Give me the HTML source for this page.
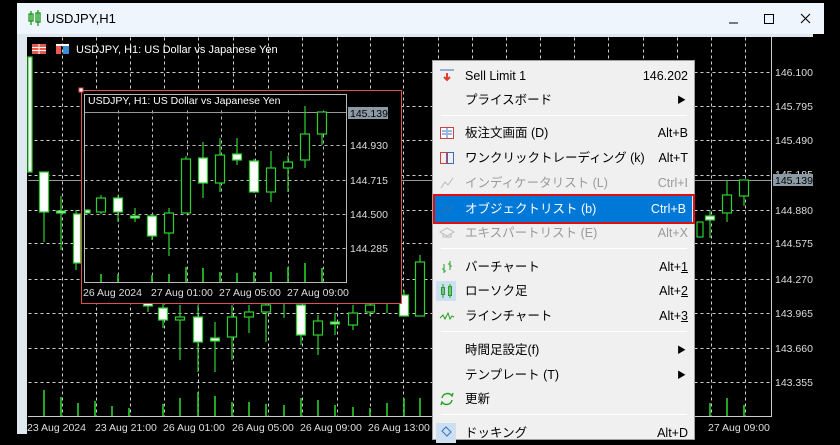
<!DOCTYPE html>
<html><head><meta charset="utf-8"><style>
*{margin:0;padding:0;box-sizing:border-box}
body{width:840px;height:436px;background:#000;position:relative;overflow:hidden;font-family:"Liberation Sans","Noto Sans CJK JP",sans-serif}
#menu{position:absolute;left:432px;top:60px;width:263px;height:380px;background:#f0f0f0;border:1px solid #a0a0a0;font-size:12.5px;color:#000}
.it{position:absolute;left:0;width:261px;height:24px;line-height:24px}
.it .t{position:absolute;left:32px}
.it .k{position:absolute;right:6px}
.it .ar{position:absolute;right:8px;font-size:9px}
.dis{color:#9a9a9a}
.sep{position:absolute;left:8px;width:246px;height:1px;background:#c8c8c8;border-bottom:1px solid #fff}
.ic{position:absolute;left:6px;top:4px;width:16px;height:16px}
.hl{background:#0078d7;color:#fff}
</style></head><body>
<svg width="840" height="436" style="position:absolute;left:0;top:0" font-family="Liberation Sans,sans-serif">
<rect x="17" y="3" width="807" height="31" fill="#eef5fc"/>
<rect x="17" y="34" width="10" height="400" fill="#dfe7ef"/>
<rect x="17" y="34" width="807" height="3" fill="#dfe7ef"/>
<rect x="813" y="34" width="11" height="400" fill="#000"/>
<g stroke="#1a9b1a" stroke-width="1.3" fill="none"><line x1="31" y1="11" x2="31" y2="25"/><rect x="29" y="14" width="4" height="7"/><line x1="38" y1="10" x2="38" y2="26"/><rect x="36" y="13" width="4" height="9"/></g>
<text x="46" y="23" font-size="13" fill="#000">USDJPY,H1</text>
<line x1="729" y1="23" x2="738" y2="23" stroke="#000"/>
<rect x="764.5" y="14.5" width="9" height="9" fill="none" stroke="#000"/>
<path d="M801 14 L810 23 M810 14 L801 23" stroke="#000" stroke-width="1.1"/>
<rect x="27" y="37" width="786" height="399" fill="#000"/>
<g stroke="#d0d0d0" stroke-dasharray="3,3" stroke-width="1" transform="translate(0.5,0.5)">
<line x1="28" y1="72" x2="771" y2="72"/><line x1="28" y1="106" x2="771" y2="106"/><line x1="28" y1="140" x2="771" y2="140"/><line x1="28" y1="175" x2="771" y2="175"/><line x1="28" y1="210" x2="771" y2="210"/><line x1="28" y1="243" x2="771" y2="243"/><line x1="28" y1="279" x2="771" y2="279"/><line x1="28" y1="313" x2="771" y2="313"/><line x1="28" y1="348" x2="771" y2="348"/><line x1="28" y1="382" x2="771" y2="382"/>
<line x1="62" y1="37" x2="62" y2="416"/><line x1="96" y1="37" x2="96" y2="416"/><line x1="130" y1="37" x2="130" y2="416"/><line x1="164" y1="37" x2="164" y2="416"/><line x1="198" y1="37" x2="198" y2="416"/><line x1="233" y1="37" x2="233" y2="416"/><line x1="268" y1="37" x2="268" y2="416"/><line x1="302" y1="37" x2="302" y2="416"/><line x1="337" y1="37" x2="337" y2="416"/><line x1="370" y1="37" x2="370" y2="416"/><line x1="403" y1="37" x2="403" y2="416"/><line x1="438" y1="37" x2="438" y2="416"/><line x1="472" y1="37" x2="472" y2="416"/><line x1="506" y1="37" x2="506" y2="416"/><line x1="540" y1="37" x2="540" y2="416"/><line x1="574" y1="37" x2="574" y2="416"/><line x1="608" y1="37" x2="608" y2="416"/><line x1="643" y1="37" x2="643" y2="416"/><line x1="677" y1="37" x2="677" y2="416"/><line x1="711" y1="37" x2="711" y2="416"/><line x1="745" y1="37" x2="745" y2="416"/>
</g>
<line x1="28" y1="180.5" x2="771" y2="180.5" stroke="#999"/>
<line x1="771.5" y1="37" x2="771.5" y2="417" stroke="#ccc"/>
<line x1="28" y1="416.5" x2="771" y2="416.5" stroke="#ccc"/>
<g stroke="#2bd12b" stroke-width="1.2">
<line x1="44" y1="172" x2="44" y2="242"/><line x1="61" y1="196" x2="61" y2="250"/><line x1="76" y1="210" x2="76" y2="270"/>
<line x1="148" y1="300" x2="148" y2="312"/><line x1="163" y1="300" x2="163" y2="328"/><line x1="180" y1="305" x2="180" y2="360"/><line x1="198" y1="305" x2="198" y2="372"/><line x1="215" y1="322" x2="215" y2="372"/><line x1="232" y1="305" x2="232" y2="360"/><line x1="249" y1="305" x2="249" y2="333"/><line x1="266" y1="300" x2="266" y2="342"/><line x1="284" y1="300" x2="284" y2="318"/><line x1="301" y1="305" x2="301" y2="345"/><line x1="318" y1="315" x2="318" y2="355"/><line x1="335" y1="313" x2="335" y2="335"/><line x1="353" y1="305" x2="353" y2="330"/><line x1="370" y1="300" x2="370" y2="316"/><line x1="387" y1="300" x2="387" y2="313"/><line x1="404" y1="290" x2="404" y2="316"/><line x1="420" y1="255" x2="420" y2="316"/>
<line x1="710" y1="210" x2="710" y2="238"/><line x1="727" y1="180" x2="727" y2="222"/><line x1="744" y1="180" x2="744" y2="206"/>
</g>
<g stroke="#2bd12b" stroke-width="1.2">
<rect x="28" y="57" width="4" height="115" fill="#fff"/><rect x="39.5" y="172" width="9" height="40" fill="#fff"/><rect x="56.5" y="211" width="9" height="2" fill="#fff"/><rect x="73.5" y="214" width="7" height="49" fill="#fff"/>
<rect x="143.5" y="303" width="9" height="3" fill="#fff"/><rect x="158.5" y="308" width="9" height="12" fill="#fff"/><rect x="175.5" y="317" width="9" height="3" fill="#000"/><rect x="193.5" y="317" width="9" height="25" fill="#fff"/><rect x="210.5" y="338" width="9" height="3" fill="#fff"/><rect x="227.5" y="317" width="9" height="20" fill="#000"/><rect x="244.5" y="312" width="9" height="5" fill="#000"/><rect x="261.5" y="305" width="9" height="7" fill="#000"/><rect x="296.5" y="305" width="9" height="30" fill="#fff"/><rect x="313.5" y="321" width="9" height="14" fill="#000"/><rect x="330.5" y="322" width="9" height="2" fill="#fff"/><rect x="348.5" y="313" width="9" height="12" fill="#000"/><rect x="365.5" y="305" width="9" height="7" fill="#000"/><rect x="399.5" y="295" width="9" height="21" fill="#fff"/><rect x="415.5" y="262" width="9" height="54" fill="#000"/>
<rect x="697" y="222" width="6" height="15" fill="#000"/><rect x="705.5" y="216" width="9" height="4" fill="#fff"/><rect x="722.5" y="195" width="9" height="18" fill="#000"/><rect x="739.5" y="180" width="9" height="16" fill="#000"/>
</g>
<g stroke="#2bd12b" stroke-width="1.6">
<line x1="44" y1="390" x2="44" y2="416"/><line x1="61" y1="397" x2="61" y2="416"/><line x1="78" y1="403" x2="78" y2="416"/><line x1="95" y1="401" x2="95" y2="416"/><line x1="112" y1="406" x2="112" y2="416"/><line x1="129" y1="408" x2="129" y2="416"/><line x1="163" y1="404" x2="163" y2="416"/><line x1="180" y1="398" x2="180" y2="416"/><line x1="198" y1="392" x2="198" y2="416"/><line x1="215" y1="396" x2="215" y2="416"/><line x1="232" y1="402" x2="232" y2="416"/><line x1="249" y1="402" x2="249" y2="416"/><line x1="266" y1="404" x2="266" y2="416"/><line x1="284" y1="405" x2="284" y2="416"/><line x1="301" y1="398" x2="301" y2="416"/><line x1="318" y1="400" x2="318" y2="416"/><line x1="335" y1="405" x2="335" y2="416"/><line x1="353" y1="407" x2="353" y2="416"/><line x1="370" y1="408" x2="370" y2="416"/><line x1="387" y1="403" x2="387" y2="416"/><line x1="404" y1="398" x2="404" y2="416"/><line x1="420" y1="398" x2="420" y2="416"/>
<line x1="710" y1="403" x2="710" y2="416"/><line x1="727" y1="398" x2="727" y2="416"/><line x1="744" y1="405" x2="744" y2="416"/>
</g>
<g font-size="10.5" fill="#ddd">
<text x="775" y="76">146.100</text><text x="775" y="110">145.795</text><text x="775" y="144">145.490</text><text x="775" y="178">145.185</text><text x="775" y="214">144.880</text><text x="775" y="247">144.575</text><text x="775" y="283">144.270</text><text x="775" y="317">143.965</text><text x="775" y="352">143.660</text><text x="775" y="386">143.355</text>
</g>
<rect x="773" y="174" width="40" height="12" fill="#8c9aa6"/><text x="775" y="184" font-size="10.5" fill="#000">145.139</text>
<g font-size="10.5" fill="#ddd">
<text x="27" y="431">23 Aug 2024</text><text x="95" y="431">23 Aug 21:00</text><text x="163" y="431">26 Aug 01:00</text><text x="232" y="431">26 Aug 05:00</text><text x="300" y="431">26 Aug 09:00</text><text x="368" y="431">26 Aug 13:00</text><text x="708" y="431">27 Aug 09:00</text>
</g>
<rect x="32" y="44" width="14" height="10" fill="#e85a4f"/><g stroke="#fff"><line x1="39" y1="44" x2="39" y2="54"/><line x1="32" y1="47.5" x2="46" y2="47.5"/><line x1="32" y1="50.5" x2="46" y2="50.5"/></g>
<rect x="56" y="44" width="5" height="10" fill="#e85a4f"/><rect x="63" y="44" width="6" height="10" fill="#3a8fd6"/><rect x="56" y="44" width="13" height="2" fill="#fff"/>
<text x="76" y="53" font-size="11" fill="#fff">USDJPY, H1:  US Dollar vs Japanese Yen</text>
<rect x="81.5" y="90.5" width="320" height="213" fill="#000" stroke="#e05050"/>
<rect x="79" y="88" width="4" height="4" fill="#fff" stroke="#e05050"/>
<g stroke="#bbb" stroke-dasharray="3,3" transform="translate(0.5,0.5)">
<line x1="84" y1="145" x2="346" y2="145"/><line x1="84" y1="180" x2="346" y2="180"/><line x1="84" y1="214" x2="346" y2="214"/><line x1="84" y1="248" x2="346" y2="248"/>
<line x1="118" y1="110" x2="118" y2="282"/><line x1="152" y1="110" x2="152" y2="282"/><line x1="187" y1="110" x2="187" y2="282"/><line x1="221" y1="110" x2="221" y2="282"/><line x1="255" y1="110" x2="255" y2="282"/><line x1="288" y1="110" x2="288" y2="282"/><line x1="323" y1="110" x2="323" y2="282"/>
</g>
<line x1="84" y1="112.5" x2="346" y2="112.5" stroke="#999"/>
<rect x="84.5" y="94.5" width="262" height="188" fill="none" stroke="#bbb"/>
<text x="88" y="104" font-size="10.5" fill="#fff">USDJPY, H1:  US Dollar vs Japanese Yen</text>
<g stroke="#2bd12b" stroke-width="1.2">
<line x1="101" y1="195" x2="101" y2="214"/><line x1="118" y1="195" x2="118" y2="222"/><line x1="135" y1="208" x2="135" y2="222"/><line x1="152" y1="214" x2="152" y2="240"/><line x1="169" y1="208" x2="169" y2="256"/><line x1="186" y1="156" x2="186" y2="213"/><line x1="203" y1="142" x2="203" y2="198"/><line x1="220" y1="138" x2="220" y2="192"/><line x1="237" y1="138" x2="237" y2="165"/><line x1="254" y1="159" x2="254" y2="193"/><line x1="271" y1="151" x2="271" y2="202"/><line x1="288" y1="156" x2="288" y2="192"/><line x1="305" y1="106" x2="305" y2="168"/><line x1="322" y1="112" x2="322" y2="145"/>
<rect x="85" y="210" width="5" height="3" fill="#fff"/><rect x="96.5" y="198" width="9" height="14" fill="#000"/><rect x="113.5" y="198" width="9" height="14" fill="#fff"/><rect x="130.5" y="216" width="9" height="2" fill="#fff"/><rect x="147.5" y="216" width="9" height="20" fill="#fff"/><rect x="164.5" y="213" width="9" height="20" fill="#000"/><rect x="181.5" y="159" width="9" height="54" fill="#000"/><rect x="198.5" y="158" width="9" height="25" fill="#fff"/><rect x="215.5" y="155" width="9" height="28" fill="#000"/><rect x="232.5" y="154" width="9" height="6" fill="#fff"/><rect x="249.5" y="161" width="9" height="31" fill="#fff"/><rect x="266.5" y="168" width="9" height="24" fill="#000"/><rect x="283.5" y="162" width="9" height="6" fill="#000"/><rect x="300.5" y="134" width="9" height="26" fill="#000"/><rect x="317.5" y="112" width="9" height="22" fill="#000"/>
</g>
<g stroke="#2bd12b" stroke-width="1.6">
<line x1="101" y1="274" x2="101" y2="282"/><line x1="118" y1="274" x2="118" y2="282"/><line x1="152" y1="275" x2="152" y2="282"/><line x1="169" y1="274" x2="169" y2="282"/><line x1="186" y1="267" x2="186" y2="282"/><line x1="203" y1="268" x2="203" y2="282"/><line x1="220" y1="272" x2="220" y2="282"/><line x1="237" y1="273" x2="237" y2="282"/><line x1="254" y1="272" x2="254" y2="282"/><line x1="271" y1="272" x2="271" y2="282"/><line x1="288" y1="267" x2="288" y2="282"/><line x1="305" y1="263" x2="305" y2="282"/><line x1="322" y1="268" x2="322" y2="282"/>
</g>
<g font-size="10.5" fill="#ddd">
<text x="350" y="149">144.930</text><text x="350" y="184">144.715</text><text x="350" y="218">144.500</text><text x="350" y="252">144.285</text>
<text x="83" y="296">26 Aug 2024</text><text x="151" y="296">27 Aug 01:00</text><text x="219" y="296">27 Aug 05:00</text><text x="287" y="296">27 Aug 09:00</text>
</g>
<rect x="348" y="107" width="40" height="12" fill="#8c9aa6"/><text x="350" y="117" font-size="10.5" fill="#000">145.139</text>
</svg>

<div id="menu">
<div class="it" style="top:3px"><svg class="ic"><line x1="1" y1="2" x2="15" y2="2" stroke="#3a6fc0"/><path d="M8 5 V11 M5 9 L8 12 L11 9" stroke="#e04030" stroke-width="2" fill="none"/></svg><span class="t">Sell Limit 1</span><span class="k">146.202</span></div>
<div class="it" style="top:27px"><span class="t">プライスボード</span><span class="ar">▶</span></div>
<div class="sep" style="top:54px"></div>
<div class="it" style="top:60px"><svg class="ic"><rect x="1.5" y="2.5" width="13" height="11" fill="#fff" stroke="#d04040"/><path d="M8 3 V13 M3 6 H7 M3 9 H7 M9 6 H13 M9 9 H13" stroke="#3a6fc0"/></svg><span class="t">板注文画面 (D)</span><span class="k">Alt+B</span></div>
<div class="it" style="top:85px"><svg class="ic"><rect x="1.5" y="2.5" width="6" height="11" fill="none" stroke="#d04040"/><rect x="8.5" y="2.5" width="6" height="11" fill="none" stroke="#3a6fc0"/></svg><span class="t">ワンクリックトレーディング (k)</span><span class="k">Alt+T</span></div>
<div class="it dis" style="top:110px"><svg class="ic"><path d="M2 13 L6 7 L9 10 L14 3" stroke="#bbb" fill="none"/></svg><span class="t">インディケータリスト (L)</span><span class="k">Ctrl+I</span></div>
<div class="it hl" style="top:135px;left:2px;width:257px;height:26px;line-height:26px"><svg class="ic" style="left:4px;top:5px"><path d="M2 12 L7 6 L10 9 L14 4" stroke="#3a70a8" fill="none"/></svg><span class="t" style="left:30px">オブジェクトリスト (b)</span><span class="k">Ctrl+B</span></div>
<div style="position:absolute;left:0;top:133px;width:262px;height:30px;border:2px solid #e01010"></div>
<div class="it dis" style="top:160px"><svg class="ic"><path d="M1 7 L8 3 L15 7 L8 11 Z M4 9 V12 H12 V9" stroke="#bbb" fill="none"/></svg><span class="t">エキスパートリスト (E)</span><span class="k">Alt+X</span></div>
<div class="sep" style="top:187px"></div>
<div class="it" style="top:194px"><svg class="ic"><path d="M5 5 V14 M3 10 H5 M5 12 H7 M11 2 V11 M9 5 H11 M11 7 H13" stroke="#22a022" fill="none"/></svg><span class="t">バーチャート</span><span class="k">Alt+<u>1</u></span></div>
<div class="it" style="top:218px"><svg class="ic" style="background:#cde0f2;width:20px;height:20px;left:3px;top:2px"><g stroke="#22a022" fill="none"><path d="M7 3 V17 M14 3 V17"/><rect x="5.5" y="6.5" width="3" height="7"/><rect x="12.5" y="5.5" width="3" height="9"/></g></svg><span class="t">ローソク足</span><span class="k">Alt+<u>2</u></span></div>
<div class="it" style="top:243px"><svg class="ic"><path d="M1 10 L4 7 L6 11 L9 5 L11 11 L13 8 L15 9" stroke="#22a022" fill="none"/></svg><span class="t">ラインチャート</span><span class="k">Alt+<u>3</u></span></div>
<div class="sep" style="top:270px"></div>
<div class="it" style="top:277px"><span class="t">時間足設定(f)</span><span class="ar">▶</span></div>
<div class="it" style="top:302px"><span class="t">テンプレート (T)</span><span class="ar">▶</span></div>
<div class="it" style="top:326px"><svg class="ic"><path d="M3 7 A5.5 5.5 0 0 1 13 5 M13 9 A5.5 5.5 0 0 1 3 11 M11 3 L13 5 L14 2 M5 13 L3 11 L2 14" stroke="#22a022" stroke-width="1.4" fill="none"/></svg><span class="t">更新</span></div>
<div class="sep" style="top:353px"></div>
<div class="it" style="top:360px"><svg class="ic" style="background:#cde0f2;width:20px;height:20px;left:3px;top:2px"><path d="M6 8 L10 4 L15 9 L11 13 Z" stroke="#3a6fc0" fill="none"/></svg><span class="t">ドッキング</span><span class="k">Alt+D</span></div>
</div>
</body></html>
